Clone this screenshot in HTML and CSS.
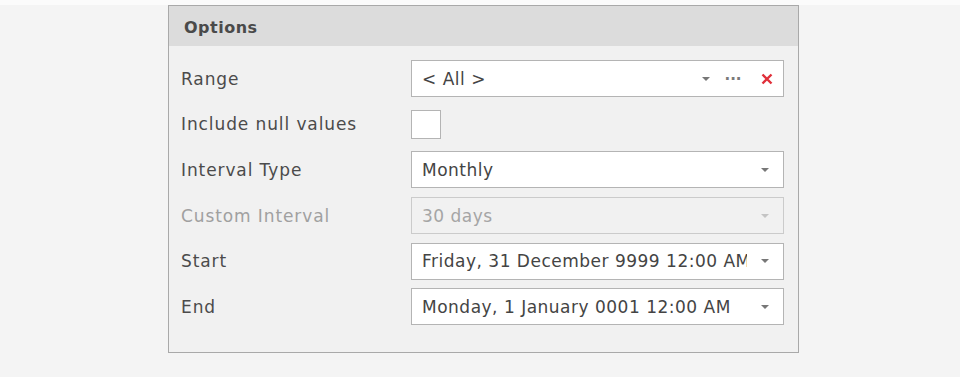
FILE: index.html
```html
<!DOCTYPE html>
<html lang="en">
<head>
    <meta charset="UTF-8">
    <title>Options</title>
    <link rel="stylesheet" href="styles.css">
</head>
<body>
    <div class="page">
        <div class="panel">
            <div class="panel-header">Options</div>
            <div class="form">
                <label class="label">Range</label>
                <div class="editor">
                    <span class="value">&lt; All &gt;</span>
                    <span class="btn arrow small"></span>
                    <span class="btn dots">···</span>
                    <span class="btn clear">
                        <svg width="12" height="12" viewBox="0 0 12 12"><path d="M1.5 1.5 L10.5 10.5 M10.5 1.5 L1.5 10.5" stroke="#e0303a" stroke-width="2.4"/></svg>
                    </span>
                </div>

                <label class="label">Include null values</label>
                <div class="check-cell"><span class="checkbox"></span></div>

                <label class="label">Interval Type</label>
                <div class="editor">
                    <span class="value">Monthly</span>
                    <span class="btn arrow"></span>
                </div>

                <label class="label disabled">Custom Interval</label>
                <div class="editor is-disabled">
                    <span class="value">30 days</span>
                    <span class="btn arrow"></span>
                </div>

                <label class="label">Start</label>
                <div class="editor">
                    <span class="value">Friday, 31 December 9999 12:00 AM</span>
                    <span class="btn arrow"></span>
                </div>

                <label class="label">End</label>
                <div class="editor">
                    <span class="value">Monday, 1 January 0001 12:00 AM</span>
                    <span class="btn arrow"></span>
                </div>
            </div>
        </div>
    </div>
</body>
</html>
```

FILE: styles.css
```css
body {
    margin: 0;
    background: #f4f4f4;
    font-family: 'DejaVu Sans', Tahoma, sans-serif;
    color: #444;
}

.page {
    border-top: 5px solid #fbfbfb;
    padding-left: 168px;
}

.panel {
    width: 629px;
    border: 1px solid #a9a9a9;
    background: #f1f1f1;
    padding-bottom: 27px;
}

.panel-header {
    background: #dcdcdc;
    height: 40px;
    line-height: 44px;
    padding-left: 15px;
    font-weight: bold;
    font-size: 16px;
    letter-spacing: 0.5px;
    color: #4a4a4a;
}

.form {
    display: grid;
    grid-template-columns: 230px 373px;
    grid-auto-rows: 37px;
    row-gap: 8.7px;
    padding: 14px 0 0 12px;
}

.label {
    display: flex;
    align-items: center;
    font-size: 17px;
    letter-spacing: 0.9px;
    color: #4b4b4b;
}

.label.disabled {
    color: #a0a0a0;
}

.editor {
    display: flex;
    align-items: center;
    background: #fff;
    border: 1px solid #b4b4b4;
    box-sizing: border-box;
    padding-left: 10px;
}

.editor.is-disabled {
    background: #f1f1f1;
    border-color: #cbcbcb;
    color: #a5a5a5;
}

.value {
    flex: 1;
    font-size: 17px;
    letter-spacing: 0.5px;
    white-space: nowrap;
    overflow: hidden;
}

.btn {
    display: flex;
    align-items: center;
    justify-content: center;
    flex-shrink: 0;
}

.arrow {
    width: 36px;
    height: 100%;
}

.arrow.small {
    width: 18px;
}

.arrow::before {
    content: "";
    border-left: 4px solid transparent;
    border-right: 4px solid transparent;
    border-top: 4px solid #777;
}

.is-disabled .arrow::before {
    border-top-color: #c4c4c4;
}

.dots {
    width: 36px;
    font-size: 15px;
    color: #7a7a7a;
    font-weight: bold;
}

.clear {
    width: 32px;
}

.check-cell {
    display: flex;
    align-items: center;
}

.checkbox {
    width: 28px;
    height: 27px;
    background: #fff;
    border: 1px solid #b4b4b4;
}
```
